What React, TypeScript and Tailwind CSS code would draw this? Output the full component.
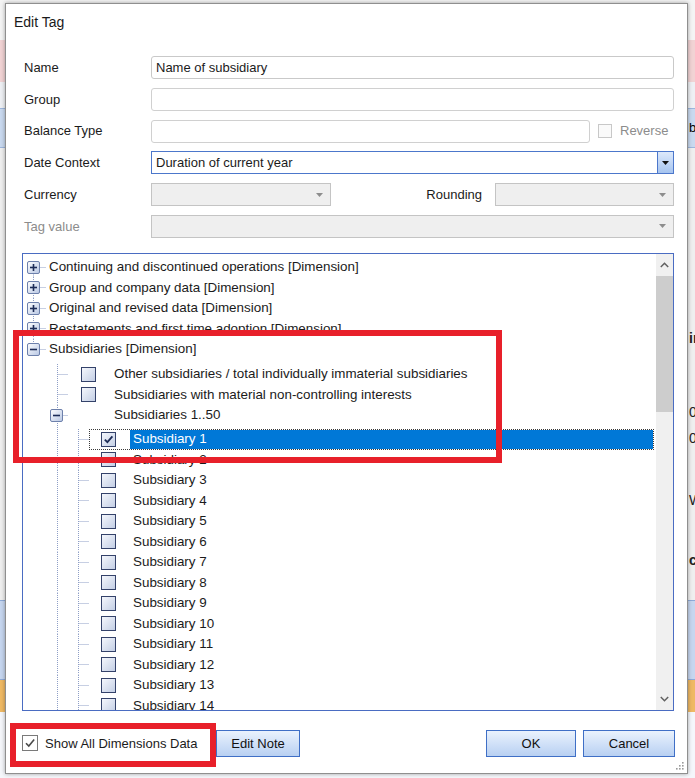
import React from "react";

type Row = {
  lvl: 0 | 1 | 2;
  text: string;
  exp?: "+" | "-";
  check?: "off" | "on" | "none";
  h: number;
  v0?: "down" | "full" | "up";
  v1?: boolean;
  v2?: boolean;
  sel?: boolean;
};

const font = "font-['Liberation_Sans',Arial,sans-serif]";

const subs: Row[] = Array.from({ length: 15 }).map((_, i) => ({
  lvl: 2,
  check: i === 0 ? "on" : "off",
  text: `Subsidiary ${i + 1}`,
  h: 20.5,
  v1: true,
  v2: true,
  sel: i === 0,
}));

const rows: Row[] = [
  { lvl: 0, exp: "+", text: "Continuing and discontinued operations [Dimension]", h: 20.5, v0: "down" },
  { lvl: 0, exp: "+", text: "Group and company data [Dimension]", h: 20.5, v0: "full" },
  { lvl: 0, exp: "+", text: "Original and revised data [Dimension]", h: 20.5, v0: "full" },
  { lvl: 0, exp: "+", text: "Restatements and first time adoption [Dimension]", h: 20.5, v0: "full" },
  { lvl: 0, exp: "-", text: "Subsidiaries [Dimension]", h: 24.75, v0: "up" },
  { lvl: 1, check: "off", text: "Other subsidiaries / total individually immaterial subsidiaries", h: 20.5, v1: true },
  { lvl: 1, check: "off", text: "Subsidiaries with material non-controlling interests", h: 20.5, v1: true },
  { lvl: 1, exp: "-", check: "none", text: "Subsidiaries 1..50", h: 24, v1: true },
  ...subs,
];

function Gutter({ row, id }: { row: Row; id: string }) {
  const w = row.lvl === 0 ? 24 : row.lvl === 1 ? 47 : 66;
  const cy = 10.5;
  const dot = { stroke: "#8e9ec6", strokeWidth: 1, strokeDasharray: "1 1" };
  const bx = row.lvl === 0 ? 4 : 27;
  return (
    <svg width={w} height={row.h} className="shrink-0 block">
      <defs>
        <linearGradient id={id} x1="0" y1="0" x2="1" y2="1">
          <stop offset="0" stopColor="#ffffff" />
          <stop offset="1" stopColor="#b7c6e3" />
        </linearGradient>
      </defs>
      {row.v0 === "down" && <line x1={10.5} y1={cy} x2={10.5} y2={row.h} {...dot} />}
      {row.v0 === "full" && <line x1={10.5} y1={0} x2={10.5} y2={row.h} {...dot} />}
      {row.v0 === "up" && <line x1={10.5} y1={0} x2={10.5} y2={cy} {...dot} />}
      {row.v1 && <line x1={34.5} y1={0} x2={34.5} y2={row.h} {...dot} />}
      {row.v2 && <line x1={55.5} y1={0} x2={55.5} y2={row.h} {...dot} />}
      {row.lvl === 0 && <line x1={10.5} y1={cy} x2={23} y2={cy} {...dot} />}
      {row.lvl === 1 && <line x1={34.5} y1={cy} x2={45} y2={cy} {...dot} />}
      {row.lvl === 2 && <line x1={55.5} y1={cy} x2={67} y2={cy} {...dot} />}
      {row.exp && (
        <g>
          <rect x={bx + 0.5} y={cy - 6} width={12} height={12} rx={1.5} fill={`url(#${id})`} stroke="#6d80ab" />
          <line x1={bx + 3} y1={cy} x2={bx + 10} y2={cy} stroke="#1d2c57" strokeWidth={1.6} />
          {row.exp === "+" && <line x1={bx + 6.5} y1={cy - 3.5} x2={bx + 6.5} y2={cy + 3.5} stroke="#1d2c57" strokeWidth={1.6} />}
        </g>
      )}
    </svg>
  );
}

function TreeCheck({ on, hidden }: { on?: boolean; hidden?: boolean }) {
  if (hidden) return <div className="w-[15px] h-[15px] shrink-0" />;
  return (
    <div className="w-[15px] h-[15px] shrink-0 border border-[#34426a] bg-linear-to-br from-[#f5f7fc] to-[#c4cfe5] flex items-center justify-center">
      {on && (
        <svg width="11" height="11" viewBox="0 0 11 11">
          <path d="M1.8 5.6 L4.4 8.2 L9.4 2.4" fill="none" stroke="#1b2a55" strokeWidth="1.8" />
        </svg>
      )}
    </div>
  );
}

function TreeRow({ row, i }: { row: Row; i: number }) {
  return (
    <div className="flex items-start" style={{ height: row.h }}>
      <Gutter row={row} id={`eg${i}`} />
      {row.lvl === 0 ? (
        <div className="flex-1 h-[21px] flex items-center border border-transparent pl-[1px] text-[#1b1b1b] whitespace-nowrap">
          {row.text}
        </div>
      ) : (
        <div
          className={
            "flex-1 mr-[2px] h-[21px] flex items-center border " +
            (row.sel ? "border-dotted border-[#3a3a3a]" : "border-transparent")
          }
        >
          <div className={row.lvl === 1 ? "ml-[10px]" : "ml-[11px]"}>
            <TreeCheck on={row.check === "on"} hidden={row.check === "none"} />
          </div>
          <div
            className={
              "h-full flex-1 flex items-center pl-[3px] whitespace-nowrap " +
              (row.lvl === 1 ? "ml-[15px] " : "ml-[14px] ") +
              (row.sel ? "bg-[#0078d7] text-white" : "text-[#1b1b1b]")
            }
          >
            {row.text}
          </div>
        </div>
      )}
    </div>
  );
}

function ComboArrow({ color }: { color: string }) {
  return (
    <svg width="7" height="4" viewBox="0 0 7 4">
      <path d="M0 0 H7 L3.5 4 Z" fill={color} />
    </svg>
  );
}

function DisabledCombo({ w }: { w?: string }) {
  return (
    <div className={`${w ?? "flex-1"} h-[23px] bg-[#efefef] border border-[#c4c4c4] flex items-center justify-end pr-[7px]`}>
      <ComboArrow color="#8d8d8d" />
    </div>
  );
}

function Button({ label, w }: { label: string; w: string }) {
  return (
    <div
      className={`${w} h-[27px] border border-[#3f6fc6] bg-linear-to-b from-[#eaf2fd] to-[#b8d0f2] flex items-center justify-center text-[13px] text-[#111]`}
    >
      {label}
    </div>
  );
}

export default function App() {
  return (
    <div className={`relative w-[695px] h-[778px] overflow-hidden bg-[#ececec] ${font}`}>
      {/* background application peeking around the dialog */}
      <div className="flex flex-col w-full h-full">
        <div className="h-[40px] bg-[#f4f4f4]" />
        <div className="h-[42px] bg-[#f1d3d4]" />
        <div className="h-[26px] bg-[#eef0f4]" />
        <div className="h-[40px] bg-[#c9d9ef] border-y border-[#9db6dd] pl-[689px] text-[13px] leading-[38px]">b</div>
        <div className="h-[452px] bg-[#efefef] flex flex-col pl-[689px] text-[14px] text-[#222]">
          <div className="h-[180px]" />
          <div className="h-[22px] font-bold">in</div>
          <div className="h-[52px]" />
          <div className="h-[26px]">0</div>
          <div className="h-[26px]">0</div>
          <div className="h-[36px]" />
          <div className="h-[30px]">W</div>
          <div className="h-[30px]" />
          <div className="h-[30px] font-bold">c</div>
        </div>
        <div className="h-[80px] bg-[#c6d6ef] border-y border-[#8eaad8]" />
        <div className="h-[32px] bg-[#efb964]" />
        <div className="flex-1 bg-[#f5f7fb]" />
      </div>

      {/* dialog window */}
      <div className="absolute left-[5px] top-[3px] w-[683px] h-[771px] border border-[#8f8f8f] bg-white shadow-[0_0_4px_rgba(0,0,0,0.35)] flex flex-col">
        <div className="h-[36px] flex items-center pl-[8px] text-[14px] text-[#1a1a1a]">Edit Tag</div>

        <div className="mt-[16px] pl-[18px] pr-[13px] flex flex-col gap-[8.8px] text-[13px] text-[#1b1b1b]">
          <div className="flex items-center h-[23px]">
            <div className="w-[127px]">Name</div>
            <div className="flex-1 h-full border border-[#c9c9c9] rounded-[3px] flex items-center pl-[4px]">Name of subsidiary</div>
          </div>
          <div className="flex items-center h-[23px]">
            <div className="w-[127px]">Group</div>
            <div className="flex-1 h-full border border-[#d0d0d0] rounded-[3px]" />
          </div>
          <div className="flex items-center h-[23px]">
            <div className="w-[127px]">Balance Type</div>
            <div className="w-[439px] h-full border border-[#d0d0d0] rounded-[3px]" />
            <div className="ml-[8px] w-[14px] h-[14px] border border-[#c8c8c8] bg-[#fafafa]" />
            <div className="ml-[8px] text-[#8c8c8c]">Reverse</div>
          </div>
          <div className="flex items-center h-[23px]">
            <div className="w-[127px]">Date Context</div>
            <div className="flex-1 h-full border border-[#4c77cb] flex items-stretch">
              <div className="flex-1 flex items-center pl-[4px]">Duration of current year</div>
              <div className="w-[16px] border-l border-[#4c77cb] bg-linear-to-b from-[#dde9fb] to-[#a6c4ef] flex items-center justify-center">
                <ComboArrow color="#111" />
              </div>
            </div>
          </div>
          <div className="flex items-center h-[23px]">
            <div className="w-[127px]">Currency</div>
            <DisabledCombo w="w-[180px]" />
            <div className="ml-auto">Rounding</div>
            <div className="ml-[13px]">
              <DisabledCombo w="w-[179px]" />
            </div>
          </div>
          <div className="flex items-center h-[23px]">
            <div className="w-[127px] text-[#8c8c8c]">Tag value</div>
            <DisabledCombo />
          </div>
        </div>

        {/* tree */}
        <div className="mt-[15px] ml-[16px] mr-[13px] h-[458px] border border-[#4a6cc2] flex text-[13.4px]">
          <div className="flex-1 overflow-hidden pt-[3px]">
            {rows.map((row, i) => (
              <TreeRow key={i} row={row} i={i} />
            ))}
          </div>
          <div className="w-[17px] bg-[#f0f0f0] flex flex-col">
            <div className="h-[22px] flex items-center justify-center">
              <svg width="9" height="6" viewBox="0 0 9 6">
                <path d="M0.8 5 L4.5 1.3 L8.2 5" fill="none" stroke="#606060" strokeWidth="1.5" />
              </svg>
            </div>
            <div className="h-[136px] bg-[#cdcdcd]" />
            <div className="flex-1" />
            <div className="h-[22px] flex items-center justify-center">
              <svg width="9" height="6" viewBox="0 0 9 6">
                <path d="M0.8 1 L4.5 4.7 L8.2 1" fill="none" stroke="#606060" strokeWidth="1.5" />
              </svg>
            </div>
          </div>
        </div>

        {/* footer */}
        <div className="mt-[19px] pl-[16px] pr-[12px] flex items-center text-[13px] text-[#1b1b1b]">
          <div className="w-[16px] h-[16px] border border-[#7a7a7a] bg-white flex items-center justify-center">
            <svg width="12" height="12" viewBox="0 0 12 12">
              <path d="M2 6.2 L4.8 9 L10.2 2.6" fill="none" stroke="#4a4a4a" strokeWidth="1.6" />
            </svg>
          </div>
          <div className="ml-[7px] w-[171px] whitespace-nowrap">Show All Dimensions Data</div>
          <Button label="Edit Note" w="w-[84px]" />
          <div className="flex-1" />
          <Button label="OK" w="w-[90px]" />
          <div className="ml-[7px]">
            <Button label="Cancel" w="w-[92px]" />
          </div>
        </div>

        {/* size grip */}
        <svg width="10" height="10" viewBox="0 0 10 10" className="absolute right-[2px] bottom-[2px]">
          {[
            [8, 2], [8, 5], [8, 8], [5, 5], [5, 8], [2, 8],
          ].map(([x, y], k) => (
            <rect key={k} x={x - 1} y={y - 1} width={1.6} height={1.6} fill="#9a9a9a" />
          ))}
        </svg>
      </div>

      {/* red highlight annotations */}
      <div className="absolute left-[13px] top-[330px] w-[489px] h-[133px] border-[6px] border-[#e8202a]" />
      <div className="absolute left-[10px] top-[723px] w-[206px] h-[44px] border-[6px] border-[#e8202a]" />
    </div>
  );
}
